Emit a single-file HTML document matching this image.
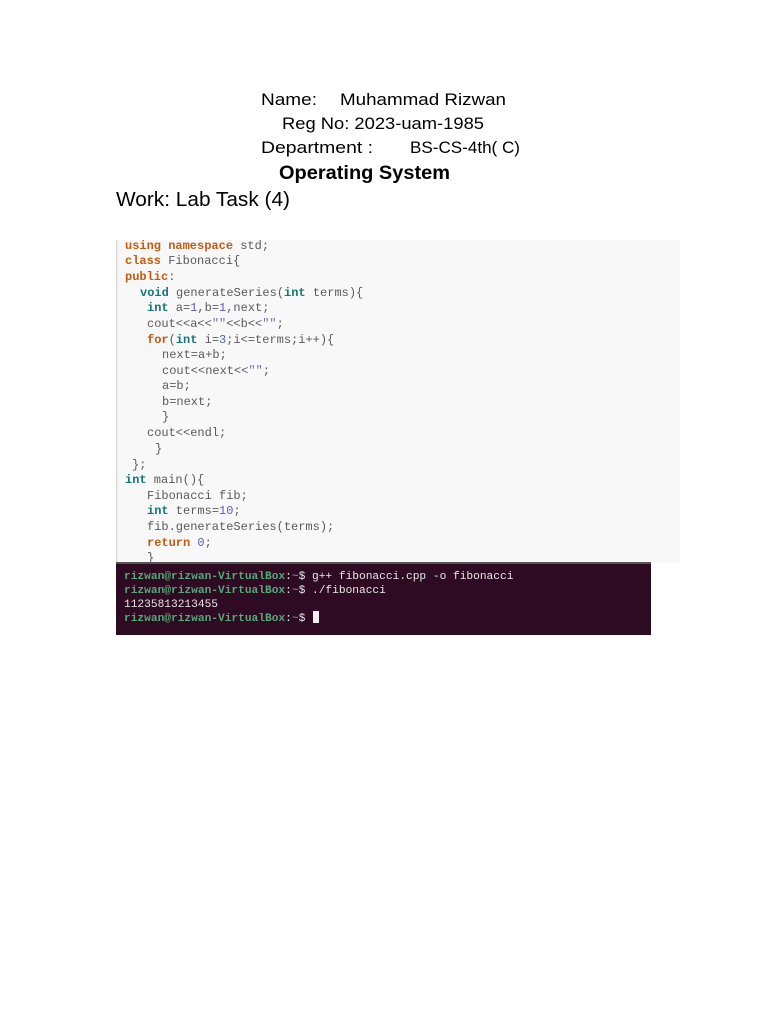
<!DOCTYPE html>
<html><head><meta charset="utf-8"><style>
html,body{margin:0;padding:0;background:#fff;width:768px;height:1024px;overflow:hidden}
svg{position:absolute;left:0;top:0}
.h{font-family:"Liberation Sans",sans-serif;fill:#000}
.c{font-family:"Liberation Mono",monospace;font-size:12px;fill:#5a5a5a}
.k{fill:#c45a10;font-weight:bold}
.t{fill:#167676;font-weight:bold}
.n{fill:#5b5bc4}
.s{fill:#6a7ab0}
.m{font-family:"Liberation Mono",monospace;font-size:11.2px;fill:#e8e8e8}
.g{fill:#55a878;font-weight:bold}
.b{fill:#7c9fcf}
</style></head><body>
<svg width="768" height="1024" xmlns="http://www.w3.org/2000/svg">
<text class="h" x="261" y="105" font-size="17" textLength="56" lengthAdjust="spacingAndGlyphs">Name:</text>
<text class="h" x="340" y="105" font-size="17" textLength="166" lengthAdjust="spacingAndGlyphs">Muhammad Rizwan</text>
<text class="h" x="282" y="129" font-size="17" textLength="202" lengthAdjust="spacingAndGlyphs">Reg No: 2023-uam-1985</text>
<text class="h" x="261" y="153" font-size="17" textLength="112" lengthAdjust="spacingAndGlyphs">Department :</text>
<text class="h" x="410" y="153" font-size="17" textLength="110" lengthAdjust="spacingAndGlyphs">BS-CS-4th( C)</text>
<text class="h" x="279" y="179" font-size="19" font-weight="bold" textLength="171" lengthAdjust="spacingAndGlyphs">Operating System</text>
<text class="h" x="116" y="206" font-size="20" textLength="174" lengthAdjust="spacingAndGlyphs">Work: Lab Task (4)</text>

<rect x="116" y="240" width="564" height="323" fill="#f8f8f8"/>
<rect x="116" y="240" width="1.5" height="323" fill="#dcdcdc"/>
<g class="c">
<text x="125" y="249"><tspan class="k">using namespace</tspan> std;</text>
<text x="125" y="264"><tspan class="k">class</tspan> Fibonacci{</text>
<text x="125" y="280"><tspan class="k">public</tspan>:</text>
<text x="140" y="296"><tspan class="t">void</tspan> generateSeries(<tspan class="t">int</tspan> terms){</text>
<text x="147" y="311"><tspan class="t">int</tspan> a=<tspan class="n">1</tspan>,b=<tspan class="n">1</tspan>,next;</text>
<text x="147" y="327">cout&lt;&lt;a&lt;&lt;<tspan class="s">""</tspan>&lt;&lt;b&lt;&lt;<tspan class="s">""</tspan>;</text>
<text x="147" y="343"><tspan class="k">for</tspan>(<tspan class="t">int</tspan> i=<tspan class="n">3</tspan>;i&lt;=terms;i++){</text>
<text x="162" y="358">next=a+b;</text>
<text x="162" y="374">cout&lt;&lt;next&lt;&lt;<tspan class="s">""</tspan>;</text>
<text x="162" y="389">a=b;</text>
<text x="162" y="405">b=next;</text>
<text x="162" y="420">}</text>
<text x="147" y="436">cout&lt;&lt;endl;</text>
<text x="155" y="452">}</text>
<text x="132" y="468">};</text>
<text x="125" y="483"><tspan class="t">int</tspan> main(){</text>
<text x="147" y="499">Fibonacci fib;</text>
<text x="147" y="514"><tspan class="t">int</tspan> terms=<tspan class="n">10</tspan>;</text>
<text x="147" y="530">fib.generateSeries(terms);</text>
<text x="147" y="546"><tspan class="k">return</tspan> <tspan class="n">0</tspan>;</text>
<text x="147" y="561">}</text>
</g>
<rect x="116" y="562" width="535" height="73" fill="#2e0b22"/>
<rect x="116" y="562" width="535" height="2" fill="#555"/>
<g class="m">
<text x="124" y="579"><tspan class="g">rizwan@rizwan-VirtualBox</tspan>:<tspan class="b">~</tspan>$ g++ fibonacci.cpp -o fibonacci</text>
<text x="124" y="593"><tspan class="g">rizwan@rizwan-VirtualBox</tspan>:<tspan class="b">~</tspan>$ ./fibonacci</text>
<text x="124" y="607">11235813213455</text>
<text x="124" y="621"><tspan class="g">rizwan@rizwan-VirtualBox</tspan>:<tspan class="b">~</tspan>$</text>
</g>
<rect x="313" y="611" width="6" height="12" fill="#f0f0f0"/>
</svg>
</body></html>
